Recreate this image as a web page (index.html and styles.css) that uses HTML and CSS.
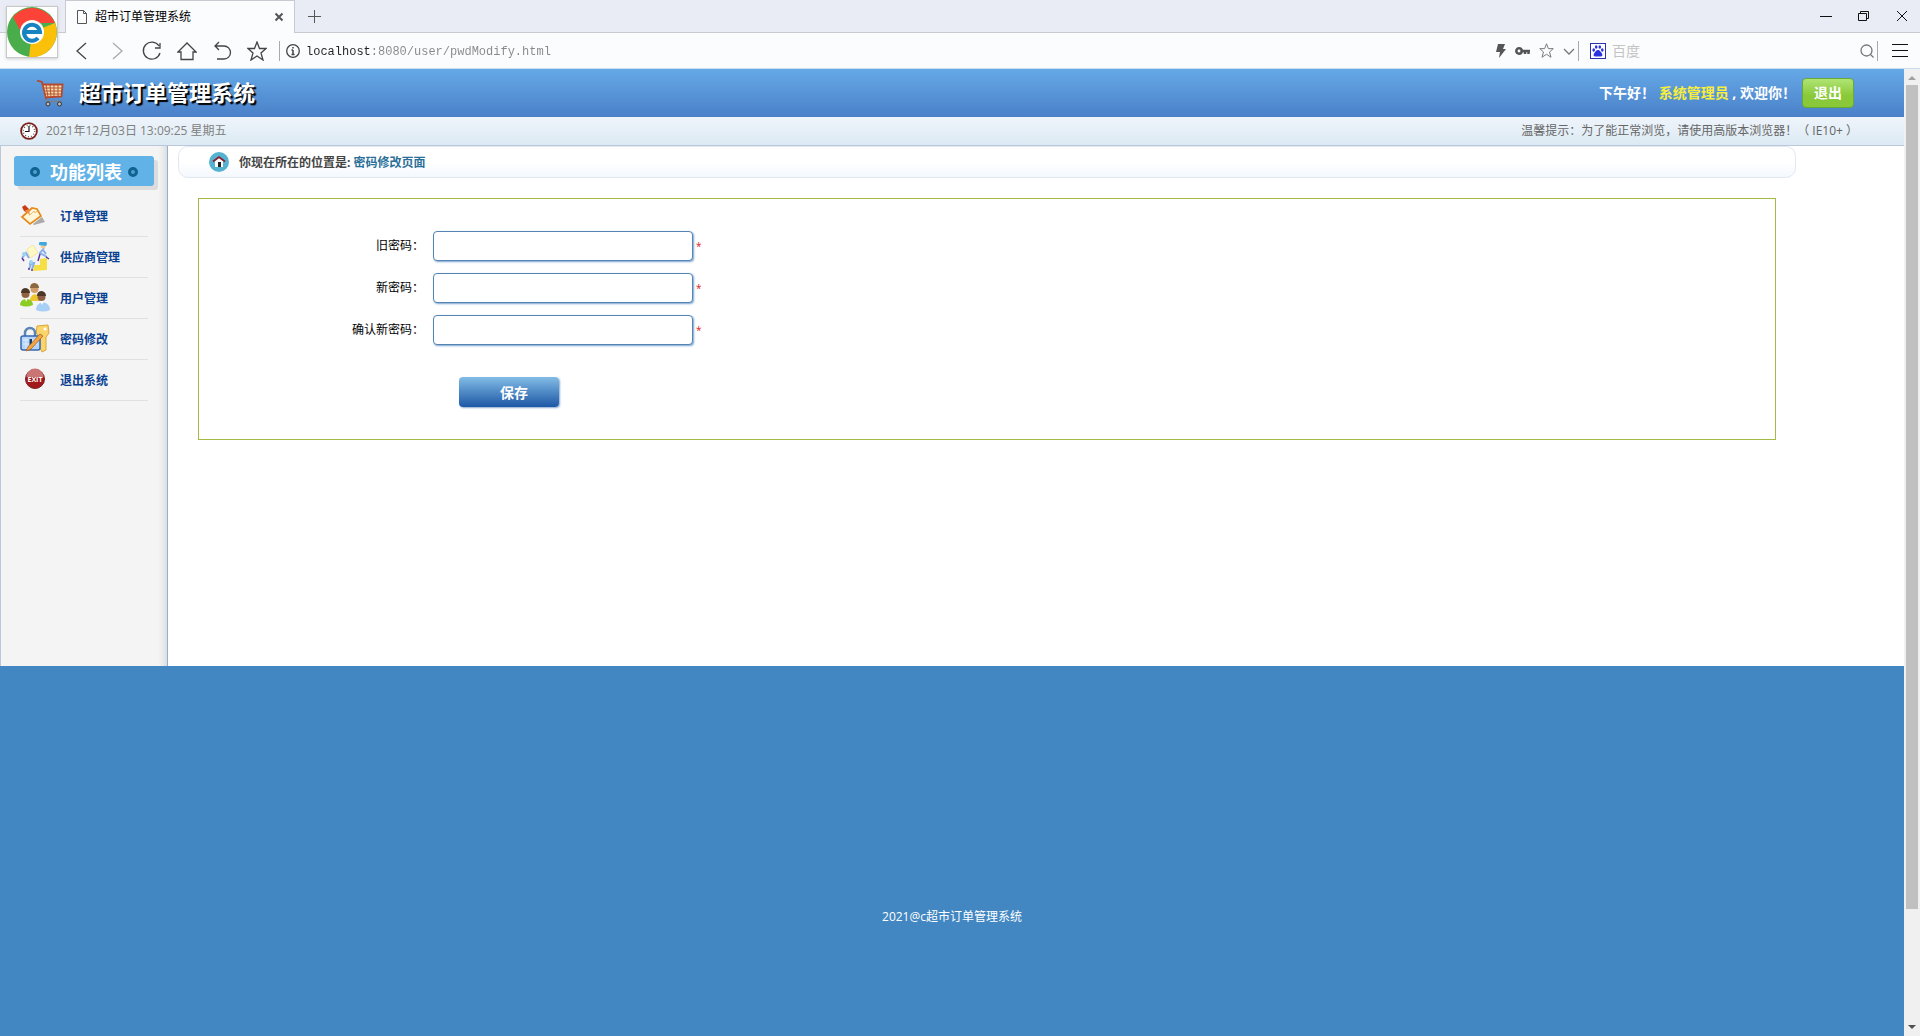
FILE: index.html
```
<!DOCTYPE html>
<html lang="zh-CN">
<head>
    <meta charset="UTF-8">
    <meta name="viewport" content="width=device-width, initial-scale=1.0">
    <title>超市订单管理系统</title>
    <link rel="stylesheet" href="styles.css">
</head>
<body>
    <div class="browser">
        <div class="tabs">
            <div class="logo">
                <svg width="50" height="50" viewBox="0 0 50 50">
                    <circle cx="25" cy="25" r="25" fill="#4aad4c"/>
                    <path d="M25 25 L48 16 A25 25 0 0 1 22 50 Z" fill="#fbc00a"/>
                    <path d="M6 10 A25 25 0 0 1 48 16 H25 L14 25 Z" fill="#fb4337"/>
                    <circle cx="25" cy="25" r="12" fill="#fff"/>
                    <path d="M16 25 H33 A8 8 0 1 0 31 31" fill="none" stroke="#1783c0" stroke-width="4"/>
                </svg>
            </div>
            <div class="tab">
                <svg width="12" height="16" viewBox="0 0 12 16" fill="none" stroke="#555"><path d="M1.5 1.5H7.5L10.5 4.5V14.5H1.5ZM7.5 1.5V4.5H10.5"/></svg>
                <span>超市订单管理系统</span>
                <button type="button" aria-label="关闭标签">
                    <svg width="10" height="10" viewBox="0 0 10 10" stroke="#555" stroke-width="2"><path d="M1.5 1.5L8.5 8.5M8.5 1.5L1.5 8.5"/></svg>
                </button>
            </div>
            <button type="button" class="add" aria-label="新标签">
                <svg width="14" height="14" viewBox="0 0 14 14" stroke="#555"><path d="M7.5 1V14M1 7.5H14"/></svg>
            </button>
            <div class="window">
                <button type="button" aria-label="最小化"><svg width="12" height="12" viewBox="0 0 12 12" stroke="#111"><path d="M0 6.5H12"/></svg></button>
                <button type="button" aria-label="还原"><svg width="12" height="12" viewBox="0 0 12 12" fill="none" stroke="#111"><path d="M1 3.5H8.500V10.500H.5V3.500ZM2.500 3.500V1.500H10.500V8.500H8.500"/></svg></button>
                <button type="button" aria-label="关闭"><svg width="12" height="12" viewBox="0 0 12 12" stroke="#111"><path d="M1 1L11 11M11 1L1 11"/></svg></button>
            </div>
        </div>
        <div class="toolbar">
            <div class="nav">
                <button type="button" aria-label="后退"><svg width="20" height="20" viewBox="0 0 20 20"><path d="M14 2L5 10L14 18"/></svg></button>
                <button type="button" class="off" aria-label="前进"><svg width="20" height="20" viewBox="0 0 20 20"><path d="M6 2L15 10L6 18"/></svg></button>
                <button type="button" aria-label="刷新"><svg width="20" height="20" viewBox="0 0 20 20"><path d="M17 5A8.500 8.500 0 1 0 18 12M18 2V7H13"/></svg></button>
                <button type="button" aria-label="主页"><svg width="20" height="20" viewBox="0 0 20 20"><path d="M1 11L10 2L19 11H16V18.500H4V11Z"/></svg></button>
                <button type="button" aria-label="恢复"><svg width="20" height="20" viewBox="0 0 20 20"><path d="M7 1L3 5L7 9M3 5H12A6.500 6.500 0 0 1 12 18H5"/></svg></button>
                <button type="button" aria-label="收藏"><svg width="20" height="20" viewBox="0 0 20 20"><path d="M10 1L12.500 7.500H19L14 12L16 19L10 15L4 19L6 12L1 7.500H7.500Z"/></svg></button>
            </div>
            <span class="line"></span>
            <svg class="info" width="14" height="14" viewBox="0 0 14 14"><circle cx="7" cy="7" r="6.300" fill="none" stroke="#444" stroke-width="1.300"/><path d="M7 6V10.500M5.500 6H7M5.500 10.500H8.500M7 3V4.500" fill="none" stroke="#444" stroke-width="1.500"/></svg>
            <input class="url" type="text" value="localhost:8080/user/pwdModify.html" aria-label="地址">
            <div class="tools">
                <svg width="10" height="14" viewBox="0 0 10 14" fill="#555"><path d="M2 0H9L7 5H10L3 14L4 8H0Z"/></svg>
                <svg width="15" height="10" viewBox="0 0 15 10" fill="none" stroke="#555" stroke-width="2.500"><circle cx="4" cy="5" r="2.700"/><path d="M7 5H15M10 5V8M13.500 5V8"/></svg>
                <svg class="thin" width="15" height="15" viewBox="0 0 20 20"><path d="M10 1L12.500 7.500H19L14 12L16 19L10 15L4 19L6 12L1 7.500H7.500Z"/></svg>
                <svg class="thin" width="12" height="12" viewBox="0 0 12 12"><path d="M1 4L6 9L11 4"/></svg>
            </div>
            <span class="line"></span>
            <svg class="paw" width="16" height="16" viewBox="0 0 16 16"><rect x=".5" y=".5" width="15" height="15" fill="#fff" stroke="#2932a8"/><g fill="#2932e1"><ellipse cx="3.700" cy="7" rx="1.300" ry="1.700"/><ellipse cx="6.200" cy="4" rx="1.300" ry="1.700"/><ellipse cx="9.800" cy="4" rx="1.300" ry="1.700"/><ellipse cx="12.300" cy="7" rx="1.300" ry="1.700"/><path d="M8 7C10 7 10.500 9 12 10.500C13 12.500 12 14 10 13.500H6C4 14 3 12.500 4 10.500C5.500 9 6 7 8 7Z"/></g></svg>
            <input class="search" type="text" placeholder="百度" aria-label="搜索">
            <svg class="thin" width="14" height="14" viewBox="0 0 14 14"><circle cx="6.500" cy="6.500" r="5.500"/><path d="M10.500 10.500L13.500 13.500"/></svg>
            <span class="line"></span>
            <button type="button" class="menu-btn" aria-label="菜单"><svg width="16" height="14" viewBox="0 0 16 14" stroke="#111"><path d="M0 .5H16M0 6.500H16M0 12.500H16"/></svg></button>
        </div>
    </div>

    <div class="view">
        <div class="page">
            <header class="header">
                <svg width="28" height="28" viewBox="0 0 28 28" fill="none">
                    <path d="M5 5H25V17L8 19Z" fill="#f8ddb0"/>
                    <path d="M9 6L11 18M13 6L14 18M17 6V18M21 6V17M6 9H25M7 12H25M8 15H25" stroke="#b4522c"/>
                    <path d="M0 1.500L5 3L9 20M5 5.500H25.500L24.500 17.500L8 18.500" stroke="#b3492e" stroke-width="1.800"/>
                    <path d="M9 20V22.500H25" stroke="#7b7f88" stroke-width="1.500"/>
                    <circle cx="11" cy="25" r="2" fill="#bbb" stroke="#333"/><circle cx="22.500" cy="25" r="2" fill="#bbb" stroke="#333"/>
                </svg>
                <h1>超市订单管理系统</h1>
                <p class="hello">下午好！ <span>系统管理员</span> , 欢迎你！</p>
                <a class="logout" href="#">退出</a>
            </header>
            <section class="info-bar">
                <svg width="18" height="18" viewBox="0 0 18 18"><circle cx="9" cy="9" r="7.900" fill="#fff" stroke="#7d1f18" stroke-width="1.800"/><circle cx="9" cy="9" r="5.700" fill="none" stroke="#444" stroke-width="1.500" stroke-dasharray=".8 2.180"/><path d="M9 4V9.500H5" fill="none" stroke="#111" stroke-width="1.200"/></svg>
                <span class="date">2021年12月03日 13:09:25 星期五</span>
                <span class="tip">温馨提示：为了能正常浏览，请使用高版本浏览器！（ IE10+ ）</span>
            </section>
            <div class="main">
                <aside class="left">
                    <h2><i></i><span>功能列表</span><i></i></h2>
                    <nav>
                        <a href="#">
                            <svg width="30" height="30" viewBox="0 0 30 30"><path d="M13 23L22 16L25 21L14 24Z" fill="#aaa"/><path d="M2 16L12 7L17 8L21 15L10 23Z" fill="#fff6d8" stroke="#e58a1c" stroke-width="1.700"/><path d="M10 14L14 10L15 12L17 10" fill="none" stroke="#e9ba70"/><path d="M2 6L5 4L9 8L8 12L4 10Z" fill="#c83c12"/><path d="M4 10L8 12L10 15L9 8Z" fill="#ef8d43"/></svg>
                            <span>订单管理</span>
                        </a>
                        <a href="#">
                            <svg width="30" height="30" viewBox="0 0 30 30"><path d="M14 23H20V17L27 16V28L13 29Z" fill="#f6df45"/><path d="M7 7L13 3L18 11L10 16Z" fill="#fdf8c4" stroke="#f0e8a8"/><path d="M2 16L6 11L9 16M9 22L14 21L12 27M11 22L9 27M24 6L20 11L27 15M23 8L26 12" fill="none" stroke="#86aee8" stroke-width="2"/><circle cx="23" cy="4" r="2.500" fill="#f4c99a"/><path d="M19 3A4 4 0 0 1 27 2L26 4Z" fill="#40a8df"/><circle cx="4" cy="12" r="2" fill="#9fd2ef"/><circle cx="11" cy="20" r="2" fill="#9fd2ef"/><path d="M2 16L4 19M8 27H10M11 28H13M20 12L18 19M26 15L29 17" stroke="#58399a" stroke-width="1.500"/></svg>
                            <span>供应商管理</span>
                        </a>
                        <a href="#">
                            <svg width="30" height="30" viewBox="0 0 30 30"><path d="M10 18C10 9 20 9 20 18Z" fill="#efc52e"/><circle cx="14.500" cy="6" r="4" fill="#d1a068"/><path d="M10 5Q10 0 15 0Q19 1 19 5Z" fill="#8d6840"/><path d="M0 22C0 14 13 14 13 22Q6 25 0 22Z" fill="#8dcc25"/><path d="M5 15L6 19L8 15Z" fill="#fff"/><circle cx="5.500" cy="11" r="4" fill="#916341"/><path d="M1 10Q1 5 6 5Q10 6 10 10Z" fill="#4e3828"/><path d="M16 27C16 17 30 17 30 27Q23 30 16 27Z" fill="#a8cff5"/><path d="M20 18L22 22L24 18Z" fill="#fff"/><circle cx="21.500" cy="14" r="4" fill="#8d5f45"/><path d="M17 13Q17 8 22 8Q26 9 26 13Z" fill="#4c3728"/></svg>
                            <span>用户管理</span>
                        </a>
                        <a href="#">
                            <svg width="30" height="30" viewBox="0 0 30 30"><path d="M17 2L28 1L29 9L26 13V26L22 28L20 24V13L16 9Z" fill="#f9d56c" stroke="#dca63a"/><circle cx="25" cy="5" r="1.500" fill="#fff"/><path d="M5 13V9A5 5 0 0 1 15 9V13" fill="none" stroke="#5c85b5" stroke-width="2.500"/><rect x="1" y="12" width="19" height="14" rx="2" fill="#b5d5f8" stroke="#3668b1" stroke-width="1.500"/><path d="M3 16H18M3 20H18M6 14V25" stroke="#dcecff"/><path d="M9.500 15H12V21H9.500Z" fill="#14396f"/><path d="M6 27L8 23L20 10L23 12L11 25Z" fill="#f3a544" stroke="#aa6220" stroke-width=".8"/></svg>
                            <span>密码修改</span>
                        </a>
                        <a href="#">
                            <svg width="30" height="30" viewBox="0 0 30 30"><circle cx="15" cy="14" r="9.500" fill="#a3191b" stroke="#7a2222"/><path d="M6.500 12A8.500 8.500 0 0 1 23.500 12Z" fill="#ca7474"/><text class="exit" x="15" y="17" text-anchor="middle">EXIT</text></svg>
                            <span>退出系统</span>
                        </a>
                    </nav>
                </aside>
                <main class="right">
                    <div class="location">
                        <svg width="20" height="20" viewBox="0 0 20 20"><circle cx="10" cy="10" r="10" fill="#55b3d1"/><path d="M6 9L10 6L14 9V15H6Z" fill="#fff"/><path d="M4 9.500L10 5L16 9.500" fill="none" stroke="#8d2033" stroke-width="1.800"/><path d="M9 10H12V15H9Z" fill="#222"/></svg>
                        <strong>你现在所在的位置是:</strong>
                        <span>密码修改页面</span>
                    </div>
                    <form class="pwd-form">
                        <div class="row">
                            <label for="oldPassword">旧密码：</label>
                            <input type="password" id="oldPassword"><b>*</b>
                        </div>
                        <div class="row">
                            <label for="newPassword">新密码：</label>
                            <input type="password" id="newPassword"><b>*</b>
                        </div>
                        <div class="row">
                            <label for="rNewPassword">确认新密码：</label>
                            <input type="password" id="rNewPassword"><b>*</b>
                        </div>
                        <button type="button" class="save">保存</button>
                    </form>
                </main>
            </div>
            <footer class="footer">2021@c超市订单管理系统</footer>
        </div>
        <div class="scrollbar">
            <span class="up"></span>
            <span class="thumb"></span>
            <span class="down"></span>
        </div>
    </div>
</body>
</html>
```
FILE: styles.css
```
* {
    margin: 0;
    padding: 0;
    box-sizing: border-box;
}

body {
    display: flex;
    flex-direction: column;
    min-height: 100vh;
    font-family: "Open Sans", "Noto Sans CJK SC", sans-serif;
    font-size: 12px;
    line-height: 18px;
    color: #000;
    background-color: #fff;
}

a {
    text-decoration: none;
}

svg {
    display: block;
    flex-shrink: 0;
}

button {
    border: none;
    background: none;
    font-family: inherit;
}

input {
    font-family: inherit;
    font-size: 12px;
    outline: none;
}

/* browser */
.browser {
    background-color: #fbfcfe;
    border-bottom: 1px solid #c9dcf0;
}

.tabs {
    display: flex;
    align-items: center;
    height: 33px;
    padding-left: 65px;
    background-color: #e9ecf5;
    border-bottom: 1px solid #c8cad2;
    position: relative;
}

.logo {
    position: absolute;
    left: 6px;
    top: 6px;
    border: 1px solid #c8c8c8;
    background-color: #fff;
    box-shadow: 0 1px 3px #ccc;
}

.tab {
    display: flex;
    align-items: center;
    gap: 7px;
    width: 230px;
    height: 33px;
    padding: 0 10px;
    background-color: #fbfcfe;
    border: 1px solid #c8cad2;
    border-bottom: none;
}

.tab button {
    margin-left: auto;
}

.add {
    margin-left: 12px;
}

.window {
    display: flex;
    gap: 26px;
    margin-left: auto;
    padding-right: 12px;
}

.toolbar {
    display: flex;
    align-items: center;
    height: 35px;
    padding-right: 12px;
}

.nav {
    display: flex;
    gap: 15px;
    padding: 0 12px 0 72px;
}

.nav svg,
.thin {
    fill: none;
    stroke: #444;
    stroke-width: 1.3;
}

.nav .off svg {
    stroke: #aaa;
}

.toolbar .thin {
    stroke: #777;
}

.line {
    width: 1px;
    height: 20px;
    background-color: #aaa;
}

.info {
    margin: 0 6px;
}

.url {
    flex-grow: 1;
    padding-top: 2px;
    border: none;
    font-family: "Liberation Mono", monospace;
    background: linear-gradient(to right, #222 65px, #888 65px);
    background-clip: text;
    -webkit-background-clip: text;
    color: transparent;
}

.tools {
    display: flex;
    align-items: center;
    gap: 9px;
    padding-right: 3px;
}

.paw {
    margin: 0 6px 0 11px;
}

.search {
    width: 248px;
    border: none;
    background: none;
    font-size: 14px;
}

.search::placeholder {
    color: #c4c4c4;
}

.toolbar .search + svg {
    margin-right: 3px;
}

.menu-btn {
    margin-left: 14px;
}

/* page */
.view {
    display: flex;
    flex-grow: 1;
}

.page {
    display: flex;
    flex-direction: column;
    flex-grow: 1;
}

.header {
    display: flex;
    align-items: center;
    height: 48px;
    padding: 0 50px 0 37px;
    background: linear-gradient(#65a9e7, #4a80c8);
    color: #fff;
}

.header h1 {
    margin-left: 14px;
    font-size: 22px;
    line-height: 28px;
    padding-bottom: 2px;
    text-shadow: 2px 2px 1px #000;
}

.hello {
    margin-left: auto;
    font-size: 14px;
    font-weight: bold;
}

.hello span {
    color: #f8ee3c;
}

.logout {
    width: 52px;
    margin-left: 6px;
    border: 1px solid #68a838;
    border-radius: 4px;
    background: linear-gradient(#b0e474, #89c838 60%);
    color: #fff;
    font-size: 14px;
    font-weight: bold;
    line-height: 28px;
    text-align: center;
}

.info-bar {
    display: flex;
    align-items: center;
    height: 29px;
    padding: 0 46px 0 20px;
    background: linear-gradient(#eff4fb, #dceaf3);
    border-bottom: 1px solid #bbc8dc;
}

.date {
    margin-left: 8px;
    color: #808080;
}

.tip {
    margin-left: auto;
    color: #666;
}

.main {
    display: flex;
    min-height: 520px;
}

.left {
    width: 168px;
    padding: 10px 13px;
    border-left: 1px solid #bbc8dc;
    border-right: 1px solid #98afcc;
    background: linear-gradient(to left, #d5dfe4, #ebebeb 4px, #f4f4f4 9px);
}

.left h2 {
    display: flex;
    align-items: center;
    justify-content: space-between;
    width: 140px;
    height: 30px;
    padding: 2px 16px 0;
    border-radius: 3px;
    background-color: #61b2e7;
    box-shadow: 4px 4px 0 #dcdcdc;
    color: #fff;
    font-size: 18px;
}

.left h2 span {
    padding-left: 4px;
}

.left h2 i {
    width: 10px;
    height: 10px;
    border: 3px solid #106391;
    border-radius: 50%;
    background-color: #4fa0d0;
}

.left nav {
    padding: 10px 6px;
}

.left nav a {
    display: flex;
    align-items: center;
    gap: 10px;
    width: 128px;
    height: 41px;
    border-bottom: 1px solid #e0e0e0;
    color: #0a4090;
    font-weight: bold;
}

.left nav span {
    padding-top: 2px;
}

.exit {
    font-size: 7px;
    font-weight: bold;
    fill: #fff;
}

.right {
    width: 85%;
    margin-left: 10px;
}

.location {
    display: flex;
    align-items: center;
    height: 32px;
    padding-left: 30px;
    border: 1px solid #e2e8f3;
    border-radius: 10px;
    background: linear-gradient(#fff 50%, #f4f8fd);
}

.location strong {
    margin: 0 3px 0 10px;
    padding-top: 2px;
    color: #444;
}

.location span {
    padding-top: 2px;
    color: #2a6f98;
    font-weight: bold;
}

.pwd-form {
    margin: 20px;
    padding: 32px 0;
    border: 1px solid #a3bb45;
}

.row {
    display: flex;
    align-items: center;
    margin-bottom: 12px;
}

.row label {
    width: 225px;
    text-align: right;
}

.row input {
    width: 260px;
    height: 30px;
    margin: 0 3px 0 9px;
    padding: 0 10px;
    border: 1px solid #5584b4;
    border-radius: 4px;
    box-shadow: 1px 1px 2px #7ba5d0;
}

.row b {
    color: #e02020;
    font-size: 10px;
    font-weight: normal;
}

.save {
    display: block;
    width: 100px;
    height: 30px;
    margin: 32px 0 0 260px;
    padding-left: 10px;
    border-radius: 4px;
    background: linear-gradient(#83bce6, #1c57a5);
    box-shadow: 1px 1px 2px #8aaad0;
    color: #fff;
    font-size: 14px;
    font-weight: bold;
}

.footer {
    flex-grow: 1;
    padding-top: 242px;
    background-color: #4287c2;
    color: #fff;
    text-align: center;
}

.scrollbar {
    display: flex;
    flex-direction: column;
    align-items: center;
    width: 16px;
    padding: 7px 0;
    background-color: #f0f0f0;
}

.up {
    border: 4px solid transparent;
    border-top: none;
    border-bottom-color: #a0a0a0;
}

.thumb {
    width: 12px;
    flex: 64 0 auto;
    margin: 5px 0;
    background-color: #c0c0c0;
}

.down {
    margin-top: 12%;
    border: 4px solid transparent;
    border-bottom: none;
    border-top-color: #505050;
}

.thumb {
    flex: none;
    height: 86.5%;
    margin-bottom: auto;
}
```
